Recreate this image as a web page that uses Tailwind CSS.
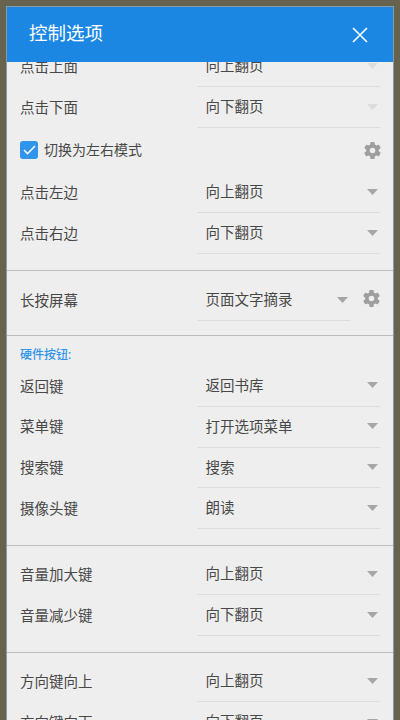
<!DOCTYPE html>
<html lang="zh"><head><meta charset="utf-8">
<script src="https://cdn.jsdelivr.net/npm/@tailwindcss/browser@4"></script>
</head>
<body class="m-0">
<div class="w-[400px] h-[720px] overflow-hidden bg-[#67634f] pt-[6px] px-[6px] font-['Roboto','Noto_Sans_CJK_SC',sans-serif]">
  <div class="w-[388px] h-[714px] bg-[#eeeeee] border-t border-x border-[#8d9aa3] flex flex-col overflow-hidden">
    <div class="h-[55px] shrink-0 bg-[#1b87e3] flex items-center justify-between pl-[22px] pr-[25px] z-10">
      <span class="text-[18.5px] text-white">控制选项</span>
      <svg class="w-[16px] h-[16px]" viewBox="0 0 16 16" fill="none" stroke="#fff" stroke-width="1.6"><path d="M1 1L15 15M15 1L1 15"/></svg>
    </div>
    <div class="flex flex-col text-[14.5px] text-[#484848] mt-[-16px]">
      <div class="flex h-[41px] px-[13px] items-center"><span class="w-[177px] shrink-0 pt-[2px]">点击上面</span><div class="flex-1 h-full flex items-center justify-between pl-[8.5px] pr-[2px] border-b border-[#dddddd]"><span class="pt-[2px]">向上翻页</span><svg class="w-[11px] h-[6px] mb-[1px]" viewBox="0 0 12 7" preserveAspectRatio="none"><path d="M0 0H12L6 7Z" fill="#dcdcdc"/></svg></div></div>
      <div class="flex h-[41px] px-[13px] items-center"><span class="w-[177px] shrink-0 pt-[2px]">点击下面</span><div class="flex-1 h-full flex items-center justify-between pl-[8.5px] pr-[2px] border-b border-[#dddddd]"><span class="pt-[2px]">向下翻页</span><svg class="w-[11px] h-[6px] mb-[1px]" viewBox="0 0 12 7" preserveAspectRatio="none"><path d="M0 0H12L6 7Z" fill="#dcdcdc"/></svg></div></div>
      <div class="flex h-[44px] px-[13px] items-center justify-between">
        <div class="flex items-center gap-[6px]">
          <span class="w-[18px] h-[18px] rounded-[3px] bg-[#2f94ea] flex items-center justify-center"><svg class="w-[13px] h-[10px]" viewBox="0 0 13 10" fill="none" stroke="#fff" stroke-width="1.5"><path d="M1 5L4.6 8.6L12 1"/></svg></span>
          <span class="text-[14px]">切换为左右模式</span>
        </div>
        <svg class="w-[21px] h-[21px] -mr-[2.5px]" viewBox="0 0 24 24"><path fill="#9e9e9e" d="M19.14 12.94c.04-.3.06-.61.06-.94s-.02-.64-.07-.94l2.03-1.58a.49.49 0 0 0 .12-.61l-1.92-3.32a.49.49 0 0 0-.59-.22l-2.39.96c-.5-.38-1.03-.7-1.62-.94l-.36-2.54a.48.48 0 0 0-.48-.41h-3.84a.47.47 0 0 0-.47.41l-.36 2.54c-.59.24-1.13.57-1.62.94l-2.39-.96a.48.48 0 0 0-.59.22L2.74 8.87a.47.47 0 0 0 .12.61l2.03 1.58c-.05.3-.09.63-.09.94s.02.64.07.94l-2.03 1.58a.49.49 0 0 0-.12.61l1.92 3.32c.12.22.37.29.59.22l2.39-.96c.5.38 1.03.7 1.62.94l.36 2.54c.05.24.24.41.48.41h3.84c.24 0 .44-.17.47-.41l.36-2.54c.59-.24 1.13-.56 1.62-.94l2.39.96c.22.08.47 0 .59-.22l1.92-3.32a.47.47 0 0 0-.12-.61l-2.01-1.58zM12 15.2A3.2 3.2 0 1 1 12 8.8a3.2 3.2 0 0 1 0 6.4z"/></svg>
      </div>
      <div class="flex h-[41px] px-[13px] items-center"><span class="w-[177px] shrink-0 pt-[2px]">点击左边</span><div class="flex-1 h-full flex items-center justify-between pl-[8.5px] pr-[2px] border-b border-[#dddddd]"><span class="pt-[2px]">向上翻页</span><svg class="w-[11px] h-[6px] mb-[1px]" viewBox="0 0 12 7" preserveAspectRatio="none"><path d="M0 0H12L6 7Z" fill="#a6a6a6"/></svg></div></div>
      <div class="flex h-[41px] px-[13px] items-center"><span class="w-[177px] shrink-0 pt-[2px]">点击右边</span><div class="flex-1 h-full flex items-center justify-between pl-[8.5px] pr-[2px] border-b border-[#dddddd]"><span class="pt-[2px]">向下翻页</span><svg class="w-[11px] h-[6px] mb-[1px]" viewBox="0 0 12 7" preserveAspectRatio="none"><path d="M0 0H12L6 7Z" fill="#a6a6a6"/></svg></div></div>
      <div class="h-[17px] border-b border-[#bdbdbd]"></div>
      <div class="flex h-[50px] px-[13px] items-center">
        <span class="w-[177px] shrink-0 pt-[11px]">长按屏幕</span>
        <div class="w-[153px] shrink-0 h-full flex items-center justify-between pl-[8.5px] pr-[2px] pt-[9px] border-b border-[#dddddd]"><span class="pt-[2px]">页面文字摘录</span><svg class="w-[11px] h-[6px] mb-[1px]" viewBox="0 0 12 7" preserveAspectRatio="none"><path d="M0 0H12L6 7Z" fill="#a6a6a6"/></svg></div>
        <svg class="w-[21px] h-[21px] ml-[10.5px] mt-[4px] shrink-0" viewBox="0 0 24 24"><path fill="#9e9e9e" d="M19.14 12.94c.04-.3.06-.61.06-.94s-.02-.64-.07-.94l2.03-1.58a.49.49 0 0 0 .12-.61l-1.92-3.32a.49.49 0 0 0-.59-.22l-2.39.96c-.5-.38-1.03-.7-1.62-.94l-.36-2.54a.48.48 0 0 0-.48-.41h-3.84a.47.47 0 0 0-.47.41l-.36 2.54c-.59.24-1.13.57-1.62.94l-2.39-.96a.48.48 0 0 0-.59.22L2.74 8.87a.47.47 0 0 0 .12.61l2.03 1.58c-.05.3-.09.63-.09.94s.02.64.07.94l-2.03 1.58a.49.49 0 0 0-.12.61l1.92 3.32c.12.22.37.29.59.22l2.39-.96c.5.38 1.03.7 1.62.94l.36 2.54c.05.24.24.41.48.41h3.84c.24 0 .44-.17.47-.41l.36-2.54c.59-.24 1.13-.56 1.62-.94l2.39.96c.22.08.47 0 .59-.22l1.92-3.32a.47.47 0 0 0-.12-.61l-2.01-1.58zM12 15.2A3.2 3.2 0 1 1 12 8.8a3.2 3.2 0 0 1 0 6.4z"/></svg>
      </div>
      <div class="h-[15px] border-b border-[#bdbdbd]"></div>
      <div class="h-[30px] pl-[13px] pt-[10px] text-[12px] leading-[18px] font-medium text-[#2f94ea]">硬件按钮:</div>
      <div class="flex h-[40.75px] px-[13px] items-center"><span class="w-[177px] shrink-0 pt-[2px]">返回键</span><div class="flex-1 h-full flex items-center justify-between pl-[8.5px] pr-[2px] border-b border-[#dddddd]"><span class="pt-[2px]">返回书库</span><svg class="w-[11px] h-[6px] mb-[1px]" viewBox="0 0 12 7" preserveAspectRatio="none"><path d="M0 0H12L6 7Z" fill="#a6a6a6"/></svg></div></div>
      <div class="flex h-[40.75px] px-[13px] items-center"><span class="w-[177px] shrink-0 pt-[2px]">菜单键</span><div class="flex-1 h-full flex items-center justify-between pl-[8.5px] pr-[2px] border-b border-[#dddddd]"><span class="pt-[2px]">打开选项菜单</span><svg class="w-[11px] h-[6px] mb-[1px]" viewBox="0 0 12 7" preserveAspectRatio="none"><path d="M0 0H12L6 7Z" fill="#a6a6a6"/></svg></div></div>
      <div class="flex h-[40.75px] px-[13px] items-center"><span class="w-[177px] shrink-0 pt-[2px]">搜索键</span><div class="flex-1 h-full flex items-center justify-between pl-[8.5px] pr-[2px] border-b border-[#dddddd]"><span class="pt-[2px]">搜索</span><svg class="w-[11px] h-[6px] mb-[1px]" viewBox="0 0 12 7" preserveAspectRatio="none"><path d="M0 0H12L6 7Z" fill="#a6a6a6"/></svg></div></div>
      <div class="flex h-[40.75px] px-[13px] items-center"><span class="w-[177px] shrink-0 pt-[2px]">摄像头键</span><div class="flex-1 h-full flex items-center justify-between pl-[8.5px] pr-[2px] border-b border-[#dddddd]"><span class="pt-[2px]">朗读</span><svg class="w-[11px] h-[6px] mb-[1px]" viewBox="0 0 12 7" preserveAspectRatio="none"><path d="M0 0H12L6 7Z" fill="#a6a6a6"/></svg></div></div>
      <div class="h-[17px] border-b border-[#bdbdbd]"></div>
      <div class="h-[8px]"></div>
      <div class="flex h-[41px] px-[13px] items-center"><span class="w-[177px] shrink-0 pt-[2px]">音量加大键</span><div class="flex-1 h-full flex items-center justify-between pl-[8.5px] pr-[2px] border-b border-[#dddddd]"><span class="pt-[2px]">向上翻页</span><svg class="w-[11px] h-[6px] mb-[1px]" viewBox="0 0 12 7" preserveAspectRatio="none"><path d="M0 0H12L6 7Z" fill="#a6a6a6"/></svg></div></div>
      <div class="flex h-[41px] px-[13px] items-center"><span class="w-[177px] shrink-0 pt-[2px]">音量减少键</span><div class="flex-1 h-full flex items-center justify-between pl-[8.5px] pr-[2px] border-b border-[#dddddd]"><span class="pt-[2px]">向下翻页</span><svg class="w-[11px] h-[6px] mb-[1px]" viewBox="0 0 12 7" preserveAspectRatio="none"><path d="M0 0H12L6 7Z" fill="#a6a6a6"/></svg></div></div>
      <div class="h-[17px] border-b border-[#bdbdbd]"></div>
      <div class="h-[8px]"></div>
      <div class="flex h-[41px] px-[13px] items-center"><span class="w-[177px] shrink-0 pt-[2px]">方向键向上</span><div class="flex-1 h-full flex items-center justify-between pl-[8.5px] pr-[2px] border-b border-[#dddddd]"><span class="pt-[2px]">向上翻页</span><svg class="w-[11px] h-[6px] mb-[1px]" viewBox="0 0 12 7" preserveAspectRatio="none"><path d="M0 0H12L6 7Z" fill="#a6a6a6"/></svg></div></div>
      <div class="flex h-[41px] px-[13px] items-center"><span class="w-[177px] shrink-0 pt-[2px]">方向键向下</span><div class="flex-1 h-full flex items-center justify-between pl-[8.5px] pr-[2px] border-b border-[#dddddd]"><span class="pt-[2px]">向下翻页</span><svg class="w-[11px] h-[6px] mb-[1px]" viewBox="0 0 12 7" preserveAspectRatio="none"><path d="M0 0H12L6 7Z" fill="#a6a6a6"/></svg></div></div>
    </div>
  </div>
</div>
</body></html>
